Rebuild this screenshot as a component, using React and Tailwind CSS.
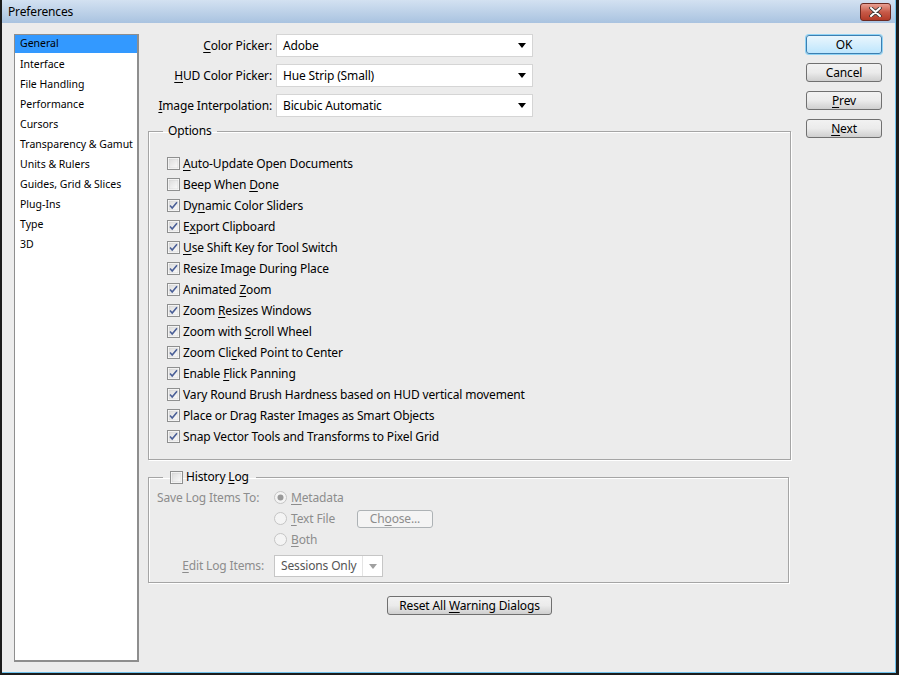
import React from 'react';

const font = { fontFamily: '"Noto Sans", "Liberation Sans", sans-serif' };

// "&" marks the mnemonic letter
const Mn = ({ text }) => {
  const i = text.indexOf('&');
  if (i < 0) return text;
  return (
    <>
      {text.slice(0, i)}
      <span className="underline underline-offset-2">{text[i + 1]}</span>
      {text.slice(i + 2)}
    </>
  );
};

const Check = ({ checked }) => (
  <svg width="13" height="13" viewBox="0 0 13 13" className="shrink-0">
    <defs>
      <linearGradient id="cb" x1="0" y1="0" x2="1" y2="1">
        <stop offset="0" stopColor="#dcdcdc" />
        <stop offset="1" stopColor="#fbfbfb" />
      </linearGradient>
    </defs>
    <rect x="0.5" y="0.5" width="12" height="12" fill="#fff" stroke="#8e8f8f" />
    <rect x="2" y="2" width="9" height="9" fill="url(#cb)" stroke="#c9c9c9" strokeWidth="0.5" />
    {checked && (
      <path d="M3 6.5 L5.2 9 L10 3.2" fill="none" stroke="#4a5f97" strokeWidth="1.6" />
    )}
  </svg>
);

const Radio = ({ on }) => (
  <svg width="13" height="13" viewBox="0 0 13 13" className="shrink-0">
    <circle cx="6.5" cy="6.5" r="6" fill="#f4f4f4" stroke="#c4c4c4" />
    {on && <circle cx="6.5" cy="6.5" r="3" fill="#9a9a9a" />}
  </svg>
);

const Arrow = ({ color = '#000' }) => (
  <svg width="8" height="5" viewBox="0 0 8 5">
    <path d="M0 0 H8 L4 5 Z" fill={color} />
  </svg>
);

const Select = ({ value }) => (
  <div className="w-[257px] h-[23px] bg-white border border-[#d5d5d5] flex items-center justify-between pl-[6px] pr-[6px] text-[12px]">
    <span>{value}</span>
    <Arrow />
  </div>
);

const Button = ({ children, primary, className = '' }) => (
  <div
    className={`h-[19px] flex items-center justify-center rounded-[3px] border text-[12px] ${
      primary
        ? 'border-[#3c7fb1] bg-gradient-to-b from-[#eaf6fd] to-[#bee6fd] shadow-[0_0_0_1px_#8fd3f5]'
        : 'border-[#707070] bg-gradient-to-b from-[#f2f2f2] via-[#ebebeb] to-[#cfcfcf]'
    } ${className}`}
  >
    {children}
  </div>
);

const categories = [
  'General',
  'Interface',
  'File Handling',
  'Performance',
  'Cursors',
  'Transparency & Gamut',
  'Units & Rulers',
  'Guides, Grid & Slices',
  'Plug-Ins',
  'Type',
  '3D',
];

const options = [
  ['&Auto-Update Open Documents', false],
  ['Beep When &Done', false],
  ['Dy&namic Color Sliders', true],
  ['E&xport Clipboard', true],
  ['&Use Shift Key for Tool Switch', true],
  ['Resize Ima&ge During Place', true],
  ['Animated &Zoom', true],
  ['Zoom &Resizes Windows', true],
  ['Zoom with &Scroll Wheel', true],
  ['Zoom Cli&cked Point to Center', true],
  ['Enable &Flick Panning', true],
  ['Vary Round Brush Hardness based on HUD vertical movement', true],
  ['Place or Drag Raster Images as Smart Objects', true],
  ['Snap Vector Tools and Transforms to Pixel Grid', true],
];

export default function App() {
  return (
    <div
      className="w-[899px] h-[675px] bg-[#1c1c1c] pl-[2px] pr-[3px] pb-[2px] text-[#000] tracking-[-0.15px]"
      style={font}
    >
      <div className="h-full flex flex-col border-r border-b border-[#6fc3ee]">
        {/* title bar */}
        <div className="h-[23px] shrink-0 bg-gradient-to-b from-[#d3e1f1] to-[#a9c3e0] flex items-center justify-between pl-[6px] pr-[4px]">
          <span className="text-[12px]">Preferences</span>
          <div className="w-[31px] h-[18px] rounded-[3px] border border-[#6b2a22] bg-gradient-to-b from-[#e8a093] via-[#c75a48] to-[#b23b28] flex items-center justify-center">
            <svg width="13" height="10" viewBox="0 0 13 10">
              <path d="M2 1 L11 9 M11 1 L2 9" stroke="#333" strokeWidth="3.6" strokeLinecap="round" />
              <path d="M2 1 L11 9 M11 1 L2 9" stroke="#fff" strokeWidth="2" strokeLinecap="round" />
            </svg>
          </div>
        </div>

        {/* body */}
        <div className="flex-1 bg-[#ececec] flex pt-[11px] pl-[12px]">
          {/* category list */}
          <div className="w-[125px] h-[628px] bg-white border-2 border-[#8e8e8e] border-t-[1px] border-l-[1px] text-[10.5px] tracking-normal">
            {categories.map((c, i) => (
              <div
                key={c}
                className={`flex items-center pl-[5px] whitespace-nowrap ${
                  i === 0 ? 'bg-[#3399ff] h-[18px] mb-[2px]' : 'h-[20px]'
                }`}
              >
                {c}
              </div>
            ))}
          </div>

          {/* main column */}
          <div className="w-[643px] ml-[9px] flex flex-col">
            <div className="flex flex-col gap-[7px] text-[12px]">
              {[
                ['&Color Picker:', 'Adobe'],
                ['&HUD Color Picker:', 'Hue Strip (Small)'],
                ['&Image Interpolation:', 'Bicubic Automatic'],
              ].map(([l, v]) => (
                <div key={l} className="flex items-center">
                  <div className="w-[125px] text-right pr-[1px]">
                    <Mn text={l} />
                  </div>
                  <div className="ml-[3px]">
                    <Select value={v} />
                  </div>
                </div>
              ))}
            </div>

            <fieldset className="mt-[6px] h-[337px] border border-[#a5a5a5] shadow-[1px_1px_0_#fff,inset_1px_1px_0_#fff] pl-[18px] pt-[14px] text-[12px]">
              <legend className="ml-[-4px] px-[5px] leading-[16px]">Options</legend>
              <div className="flex flex-col">
                {options.map(([t, c]) => (
                  <div key={t} className="h-[21px] flex items-center gap-[3px]">
                    <Check checked={c} />
                    <span>
                      <Mn text={t} />
                    </span>
                  </div>
                ))}
              </div>
            </fieldset>

            <fieldset className="mt-[9px] w-[641px] h-[114px] border border-[#a5a5a5] shadow-[1px_1px_0_#fff,inset_1px_1px_0_#fff] text-[12px] pl-[8px]">
              <legend className="ml-[6px] px-[7px] flex items-center gap-[3px] leading-[16px]">
                <Check checked={false} />
                <span>
                  History <Mn text="&Log" />
                </span>
              </legend>
              <div className="flex text-[#8d8d8d] mt-[2px]">
                <div className="w-[117px] leading-[21px]">Save Log Items To:</div>
                <div className="flex flex-col">
                  <div className="h-[21px] flex items-center gap-[4px]">
                    <Radio on />
                    <span className="text-[#8d8d8d]">
                      <Mn text="&Metadata" />
                    </span>
                  </div>
                  <div className="h-[21px] flex items-center gap-[4px]">
                    <Radio />
                    <span>
                      <Mn text="&Text File" />
                    </span>
                    <div className="ml-[18px] w-[76px] h-[18px] border border-[#adb2b5] rounded-[3px] bg-[#f4f4f4] flex items-center justify-center">
                      <Mn text="Ch&oose..." />
                    </div>
                  </div>
                  <div className="h-[21px] flex items-center gap-[4px]">
                    <Radio />
                    <span>
                      <Mn text="&Both" />
                    </span>
                  </div>
                </div>
              </div>
              <div className="flex items-center text-[#8d8d8d] mt-[5px]">
                <div className="w-[107px] text-right">
                  <Mn text="&Edit Log Items:" />
                </div>
                <div className="ml-[10px] w-[109px] h-[22px] border border-[#c6c6c6] bg-white flex items-center text-[#555]">
                  <span className="flex-1 pl-[6px] border-r border-[#e4e4e4] h-full flex items-center">Sessions Only</span>
                  <div className="w-[19px] flex justify-center">
                    <Arrow color="#a0a0a0" />
                  </div>
                </div>
              </div>
            </fieldset>

            <div className="flex justify-center mt-[13px]">
              <Button className="w-[165px]">
                <span>
                  Reset All <Mn text="&Warning Dialogs" />
                </span>
              </Button>
            </div>
          </div>

          {/* buttons */}
          <div className="ml-[15px] flex flex-col gap-[9px] pt-[1px]">
            <Button primary className="w-[76px]">OK</Button>
            <Button className="w-[76px]">Cancel</Button>
            <Button className="w-[76px]">
              <Mn text="&Prev" />
            </Button>
            <Button className="w-[76px]">
              <Mn text="&Next" />
            </Button>
          </div>
        </div>
      </div>
    </div>
  );
}
